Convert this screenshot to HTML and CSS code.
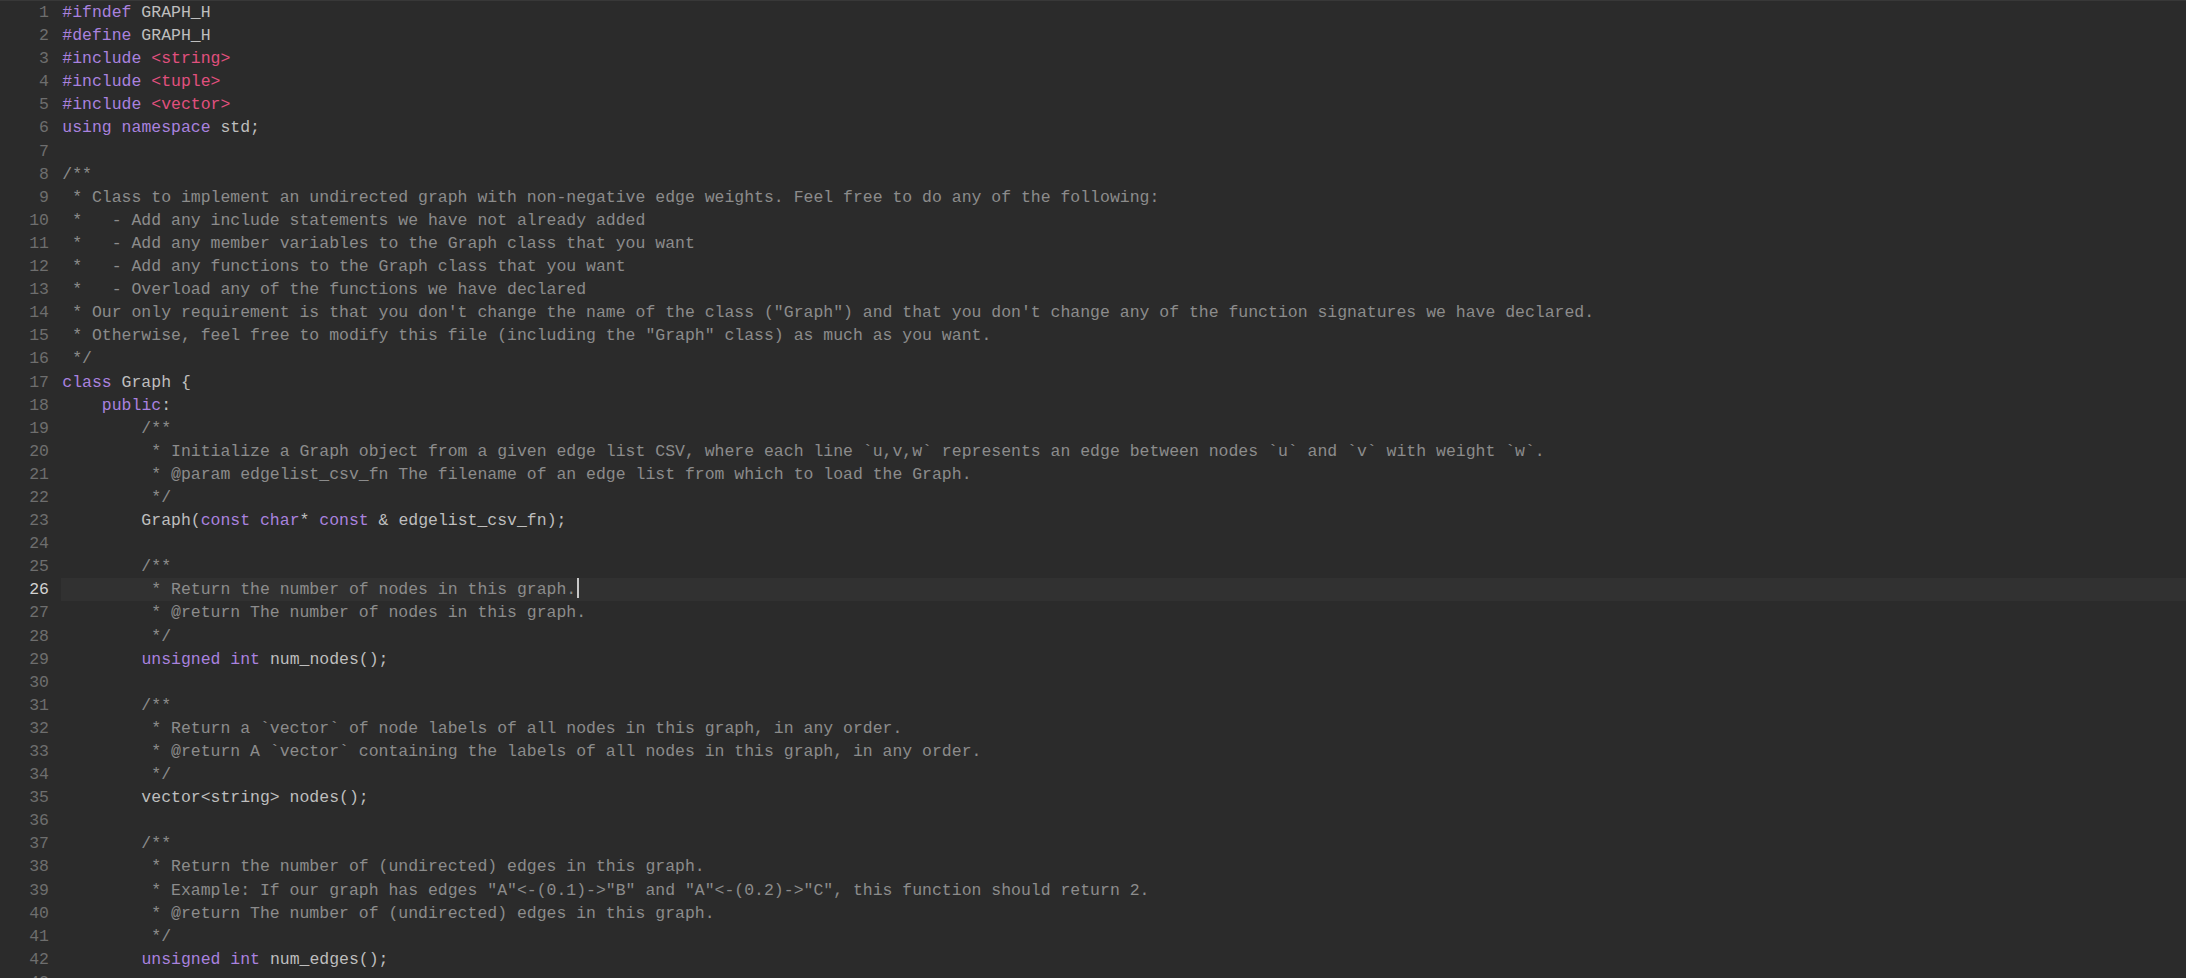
FILE: index.html
```html
<!DOCTYPE html>
<html>
<head>
<meta charset="utf-8">
<link rel="stylesheet" href="styles.css">
</head>
<body>
<div class="editor">
<div class="line"><span class="ln">1</span><span class="code"><span class="kw">#ifndef</span> GRAPH_H</span></div>
<div class="line"><span class="ln">2</span><span class="code"><span class="kw">#define</span> GRAPH_H</span></div>
<div class="line"><span class="ln">3</span><span class="code"><span class="kw">#include</span> <span class="str">&lt;string&gt;</span></span></div>
<div class="line"><span class="ln">4</span><span class="code"><span class="kw">#include</span> <span class="str">&lt;tuple&gt;</span></span></div>
<div class="line"><span class="ln">5</span><span class="code"><span class="kw">#include</span> <span class="str">&lt;vector&gt;</span></span></div>
<div class="line"><span class="ln">6</span><span class="code"><span class="kw">using</span> <span class="kw">namespace</span> std;</span></div>
<div class="line"><span class="ln">7</span><span class="code"></span></div>
<div class="line"><span class="ln">8</span><span class="code cm">/**</span></div>
<div class="line"><span class="ln">9</span><span class="code cm"> * Class to implement an undirected graph with non-negative edge weights. Feel free to do any of the following:</span></div>
<div class="line"><span class="ln">10</span><span class="code cm"> *   - Add any include statements we have not already added</span></div>
<div class="line"><span class="ln">11</span><span class="code cm"> *   - Add any member variables to the Graph class that you want</span></div>
<div class="line"><span class="ln">12</span><span class="code cm"> *   - Add any functions to the Graph class that you want</span></div>
<div class="line"><span class="ln">13</span><span class="code cm"> *   - Overload any of the functions we have declared</span></div>
<div class="line"><span class="ln">14</span><span class="code cm"> * Our only requirement is that you don't change the name of the class ("Graph") and that you don't change any of the function signatures we have declared.</span></div>
<div class="line"><span class="ln">15</span><span class="code cm"> * Otherwise, feel free to modify this file (including the "Graph" class) as much as you want.</span></div>
<div class="line"><span class="ln">16</span><span class="code cm"> */</span></div>
<div class="line"><span class="ln">17</span><span class="code"><span class="kw">class</span> Graph {</span></div>
<div class="line"><span class="ln">18</span><span class="code">    <span class="kw">public</span>:</span></div>
<div class="line"><span class="ln">19</span><span class="code cm">        /**</span></div>
<div class="line"><span class="ln">20</span><span class="code cm">         * Initialize a Graph object from a given edge list CSV, where each line `u,v,w` represents an edge between nodes `u` and `v` with weight `w`.</span></div>
<div class="line"><span class="ln">21</span><span class="code cm">         * @param edgelist_csv_fn The filename of an edge list from which to load the Graph.</span></div>
<div class="line"><span class="ln">22</span><span class="code cm">         */</span></div>
<div class="line"><span class="ln">23</span><span class="code">        Graph(<span class="kw">const</span> <span class="kw">char</span>* <span class="kw">const</span> &amp; edgelist_csv_fn);</span></div>
<div class="line"><span class="ln">24</span><span class="code"></span></div>
<div class="line"><span class="ln">25</span><span class="code cm">        /**</span></div>
<div class="line current"><span class="ln">26</span><span class="code cm">         * Return the number of nodes in this graph.<span class="cursor"></span></span></div>
<div class="line"><span class="ln">27</span><span class="code cm">         * @return The number of nodes in this graph.</span></div>
<div class="line"><span class="ln">28</span><span class="code cm">         */</span></div>
<div class="line"><span class="ln">29</span><span class="code">        <span class="kw">unsigned</span> <span class="kw">int</span> num_nodes();</span></div>
<div class="line"><span class="ln">30</span><span class="code"></span></div>
<div class="line"><span class="ln">31</span><span class="code cm">        /**</span></div>
<div class="line"><span class="ln">32</span><span class="code cm">         * Return a `vector` of node labels of all nodes in this graph, in any order.</span></div>
<div class="line"><span class="ln">33</span><span class="code cm">         * @return A `vector` containing the labels of all nodes in this graph, in any order.</span></div>
<div class="line"><span class="ln">34</span><span class="code cm">         */</span></div>
<div class="line"><span class="ln">35</span><span class="code">        vector&lt;string&gt; nodes();</span></div>
<div class="line"><span class="ln">36</span><span class="code"></span></div>
<div class="line"><span class="ln">37</span><span class="code cm">        /**</span></div>
<div class="line"><span class="ln">38</span><span class="code cm">         * Return the number of (undirected) edges in this graph.</span></div>
<div class="line"><span class="ln">39</span><span class="code cm">         * Example: If our graph has edges "A"&lt;-(0.1)-&gt;"B" and "A"&lt;-(0.2)-&gt;"C", this function should return 2.</span></div>
<div class="line"><span class="ln">40</span><span class="code cm">         * @return The number of (undirected) edges in this graph.</span></div>
<div class="line"><span class="ln">41</span><span class="code cm">         */</span></div>
<div class="line"><span class="ln">42</span><span class="code">        <span class="kw">unsigned</span> <span class="kw">int</span> num_edges();</span></div>
<div class="line"><span class="ln">43</span><span class="code"></span></div>
</div>
</body>
</html>
```
FILE: styles.css
```css
html, body {
  margin: 0;
  padding: 0;
  background: #2b2b2b;
  height: 100%;
  overflow: hidden;
}

.editor {
  border-top: 1px solid #383838;
  font-family: "Liberation Mono", "DejaVu Sans Mono", monospace;
  font-size: 16.48px;
  line-height: 23.1px;
  color: #bebebe;
}

.line {
  display: flex;
  height: 23.1px;
}

.ln {
  flex: 0 0 49px;
  width: 49px;
  padding-right: 12px;
  text-align: right;
  color: #6e6e6e;
  white-space: pre;
}

.code {
  flex: 1 1 auto;
  padding-left: 1.3px;
  white-space: pre;
  position: relative;
}

.current .code {
  background: #313131;
}

.current .ln {
  color: #d2d2d2;
}

.kw {
  color: #a982df;
}

.str {
  color: #e0507e;
}

.cm {
  color: #8c8c8c;
}

.cursor {
  display: inline-block;
  width: 2px;
  height: 20px;
  margin-left: 1px;
  vertical-align: -4px;
  background: #c8c8c8;
}
```
